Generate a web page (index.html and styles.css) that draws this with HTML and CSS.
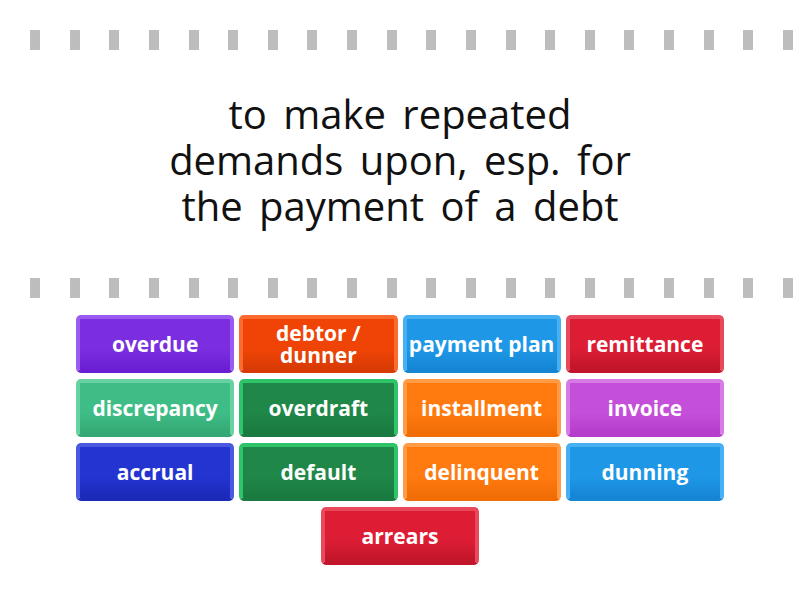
FILE: index.html
```html
<!DOCTYPE html>
<html lang="en">
  <head>
    <meta charset="UTF-8" />
    <meta name="viewport" content="width=device-width, initial-scale=1.0" />
    <title>Match Up</title>
    <link rel="stylesheet" href="styles.css">
  </head>
  <body>
    <div class="board">
      <div class="ticks">
        <span></span><span></span><span></span><span></span><span></span>
        <span></span><span></span><span></span><span></span><span></span>
        <span></span><span></span><span></span><span></span><span></span>
        <span></span><span></span><span></span><span></span><span></span>
      </div>
      <div class="question">
        <p>to make repeated demands upon, esp. for the payment of a debt</p>
      </div>
      <div class="ticks">
        <span></span><span></span><span></span><span></span><span></span>
        <span></span><span></span><span></span><span></span><span></span>
        <span></span><span></span><span></span><span></span><span></span>
        <span></span><span></span><span></span><span></span><span></span>
      </div>
      <div class="answers">
        <div class="tile purple">overdue</div>
        <div class="tile orange-red">debtor /<br>dunner</div>
        <div class="tile sky">payment plan</div>
        <div class="tile red">remittance</div>
        <div class="tile mint">discrepancy</div>
        <div class="tile green">overdraft</div>
        <div class="tile orange">installment</div>
        <div class="tile violet">invoice</div>
        <div class="tile blue">accrual</div>
        <div class="tile green">default</div>
        <div class="tile orange">delinquent</div>
        <div class="tile sky">dunning</div>
        <div class="tile red last">arrears</div>
      </div>
    </div>
  </body>
</html>
```

FILE: styles.css
```css
body {
  margin: 0;
  background: #ffffff;
  font-family: "Open Sans", "Noto Sans", sans-serif;
  color: #111111;
}
.board {
  width: 800px;
  height: 600px;
  padding-top: 30px;
  box-sizing: border-box;
}
.ticks {
  display: flex;
  justify-content: space-between;
  padding: 0 7px 0 30px;
  height: 20px;
}
.ticks span {
  width: 10px;
  height: 20px;
  background: #bdbdbd;
}
.question {
  height: 228px;
  display: flex;
  align-items: center;
  justify-content: center;
  padding-bottom: 8px;
  box-sizing: border-box;
}
.question p {
  margin: 0;
  width: 500px;
  text-align: center;
  font-size: 40px;
  line-height: 46px;
  word-spacing: 6px;
}
.answers {
  display: grid;
  grid-template-columns: repeat(4, 1fr);
  column-gap: 5px;
  row-gap: 6px;
  width: 648px;
  margin: 17px auto 0;
}
.tile {
  --face: #7a2ee0;
  --rim: #9a5cf0;
  --base: #5f1fc0;
  height: 58px;
  box-sizing: border-box;
  display: flex;
  align-items: center;
  justify-content: center;
  text-align: center;
  color: #ffffff;
  font-weight: 700;
  font-size: 21px;
  line-height: 22px;
  border-radius: 5px;
  border: 4px solid var(--rim);
  border-bottom-color: var(--base);
  background: linear-gradient(var(--face) 60%, var(--base));
}
.tile.last {
  grid-column: 2 / span 2;
  width: 158px;
  justify-self: center;
}
.purple { --face: #7a2ee0; --rim: #9a5cf0; --base: #6a1fd2; }
.orange-red { --face: #f04406; --rim: #fb6a2e; --base: #d83a05; }
.sky { --face: #1e98e6; --rim: #46b0f2; --base: #1585d4; }
.red { --face: #dc1d34; --rim: #e84a5c; --base: #c0152a; }
.mint { --face: #3fbd86; --rim: #68d2a2; --base: #33a874; }
.green { --face: #1f8748; --rim: #2ec46a; --base: #1a7a40; }
.orange { --face: #ff7b10; --rim: #ff9a45; --base: #f06c05; }
.violet { --face: #c44fd8; --rim: #d77ae6; --base: #b53dcb; }
.blue { --face: #2434d0; --rim: #4a5ae0; --base: #1c2ab8; }
```
